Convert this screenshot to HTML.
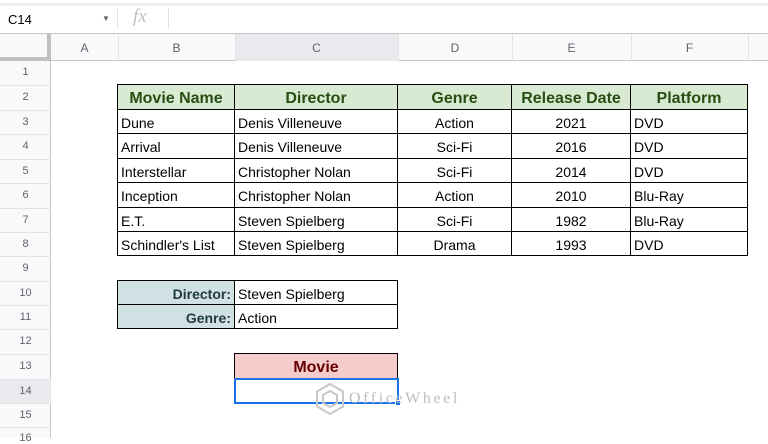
<!DOCTYPE html>
<html><head><style>
*{margin:0;padding:0;box-sizing:border-box}
body{width:768px;height:438px;overflow:hidden;background:#fff;font-family:"Liberation Sans",Arial,sans-serif;position:relative}
.a{position:absolute}
.hl{position:absolute;height:1px;background:#e2e3e3;left:0;width:51px}
.vh{position:absolute;top:34px;height:27px;width:1px;background:#e2e3e3}
.ch{position:absolute;top:34px;height:27px;line-height:28px;text-align:center;font-size:12px;color:#5f6368}
.rh{position:absolute;left:0;width:51px;text-align:center;font-size:11px;color:#5f6368}
.c{position:absolute;font-size:14px;color:#000;white-space:nowrap;overflow:hidden;padding:0 3px;border:1px solid #000;margin:-1px 0 0 -1px}
.h{background:#d9ead3;color:#274e13;font-weight:bold;font-size:16px;text-align:center}
.ctr{text-align:center}
.l{background:#d0e0e3;font-weight:bold;text-align:right;color:#1f3a40}
</style></head><body>
<div class="a" style="left:0;top:3px;width:768px;height:3px;background:#eeeeee"></div>
<div class="a" style="left:8px;top:12px;font-size:13px;color:#000">C14</div>
<div class="a" style="left:102px;top:14px;font-size:8px;color:#5f6368">▼</div>
<div class="a" style="left:117px;top:8px;width:1px;height:20px;background:#e0e0e0"></div>
<div class="a" style="left:133px;top:6px;font-family:'Liberation Serif',serif;font-style:italic;font-size:19px;color:#c0c0c0">fx</div>
<div class="a" style="left:168px;top:8px;width:1px;height:20px;background:#e0e0e0"></div>
<div class="a" style="left:0;top:33px;width:768px;height:28px;background:#f8f9fa;border-top:1px solid #c4c7c5;border-bottom:1px solid #c4c7c5"></div>
<div class="a" style="left:235px;top:34px;width:163px;height:27px;background:#e8eaed"></div>
<div class="a" style="left:0;top:61px;width:51px;height:377px;background:#f8f9fa;border-right:1px solid #c4c7c5"></div>
<div class="a" style="left:0;top:379px;width:51px;height:24px;background:#e8eaed"></div>
<div class="a" style="left:0;top:34px;width:51px;height:27px;border-right:4px solid #c0c0c0;border-bottom:4px solid #c0c0c0"></div>
<div class="vh" style="left:118px"></div><div class="vh" style="left:235px"></div><div class="vh" style="left:398px"></div><div class="vh" style="left:512px"></div><div class="vh" style="left:631px"></div><div class="vh" style="left:748px"></div>
<div class="hl" style="top:85px"></div><div class="hl" style="top:110px"></div><div class="hl" style="top:134px"></div><div class="hl" style="top:159px"></div><div class="hl" style="top:183px"></div><div class="hl" style="top:208px"></div><div class="hl" style="top:232px"></div><div class="hl" style="top:256px"></div><div class="hl" style="top:281px"></div><div class="hl" style="top:305px"></div><div class="hl" style="top:329px"></div><div class="hl" style="top:354px"></div><div class="hl" style="top:379px"></div><div class="hl" style="top:403px"></div><div class="hl" style="top:427px"></div>
<div class="ch" style="left:51px;width:67px">A</div><div class="ch" style="left:118px;width:117px">B</div><div class="ch" style="left:235px;width:163px">C</div><div class="ch" style="left:398px;width:114px">D</div><div class="ch" style="left:512px;width:119px">E</div><div class="ch" style="left:631px;width:117px">F</div>
<div class="rh" style="top:66px">1</div><div class="rh" style="top:91px">2</div><div class="rh" style="top:116px">3</div><div class="rh" style="top:140px">4</div><div class="rh" style="top:165px">5</div><div class="rh" style="top:189px">6</div><div class="rh" style="top:214px">7</div><div class="rh" style="top:238px">8</div><div class="rh" style="top:262px">9</div><div class="rh" style="top:287px">10</div><div class="rh" style="top:311px">11</div><div class="rh" style="top:335px">12</div><div class="rh" style="top:360px">13</div><div class="rh" style="top:385px">14</div><div class="rh" style="top:409px">15</div><div class="rh" style="top:432px">16</div>
<div class="c h" style="left:118px;top:85px;width:118px;height:26px;line-height:27px">Movie Name</div>
<div class="c h" style="left:235px;top:85px;width:164px;height:26px;line-height:27px">Director</div>
<div class="c h" style="left:398px;top:85px;width:115px;height:26px;line-height:27px">Genre</div>
<div class="c h" style="left:512px;top:85px;width:120px;height:26px;line-height:27px">Release Date</div>
<div class="c h" style="left:631px;top:85px;width:118px;height:26px;line-height:27px">Platform</div>

<div class="c" style="left:118px;top:110px;width:118px;height:25px;line-height:26px">Dune</div><div class="c" style="left:235px;top:110px;width:164px;height:25px;line-height:26px">Denis Villeneuve</div><div class="c ctr" style="left:398px;top:110px;width:115px;height:25px;line-height:26px">Action</div><div class="c ctr" style="left:512px;top:110px;width:120px;height:25px;line-height:26px">2021</div><div class="c" style="left:631px;top:110px;width:118px;height:25px;line-height:26px">DVD</div>
<div class="c" style="left:118px;top:134px;width:118px;height:26px;line-height:27px">Arrival</div><div class="c" style="left:235px;top:134px;width:164px;height:26px;line-height:27px">Denis Villeneuve</div><div class="c ctr" style="left:398px;top:134px;width:115px;height:26px;line-height:27px">Sci-Fi</div><div class="c ctr" style="left:512px;top:134px;width:120px;height:26px;line-height:27px">2016</div><div class="c" style="left:631px;top:134px;width:118px;height:26px;line-height:27px">DVD</div>
<div class="c" style="left:118px;top:159px;width:118px;height:25px;line-height:26px">Interstellar</div><div class="c" style="left:235px;top:159px;width:164px;height:25px;line-height:26px">Christopher Nolan</div><div class="c ctr" style="left:398px;top:159px;width:115px;height:25px;line-height:26px">Sci-Fi</div><div class="c ctr" style="left:512px;top:159px;width:120px;height:25px;line-height:26px">2014</div><div class="c" style="left:631px;top:159px;width:118px;height:25px;line-height:26px">DVD</div>
<div class="c" style="left:118px;top:183px;width:118px;height:26px;line-height:27px">Inception</div><div class="c" style="left:235px;top:183px;width:164px;height:26px;line-height:27px">Christopher Nolan</div><div class="c ctr" style="left:398px;top:183px;width:115px;height:26px;line-height:27px">Action</div><div class="c ctr" style="left:512px;top:183px;width:120px;height:26px;line-height:27px">2010</div><div class="c" style="left:631px;top:183px;width:118px;height:26px;line-height:27px">Blu-Ray</div>
<div class="c" style="left:118px;top:208px;width:118px;height:25px;line-height:26px">E.T.</div><div class="c" style="left:235px;top:208px;width:164px;height:25px;line-height:26px">Steven Spielberg</div><div class="c ctr" style="left:398px;top:208px;width:115px;height:25px;line-height:26px">Sci-Fi</div><div class="c ctr" style="left:512px;top:208px;width:120px;height:25px;line-height:26px">1982</div><div class="c" style="left:631px;top:208px;width:118px;height:25px;line-height:26px">Blu-Ray</div>
<div class="c" style="left:118px;top:232px;width:118px;height:25px;line-height:26px">Schindler's List</div><div class="c" style="left:235px;top:232px;width:164px;height:25px;line-height:26px">Steven Spielberg</div><div class="c ctr" style="left:398px;top:232px;width:115px;height:25px;line-height:26px">Drama</div><div class="c ctr" style="left:512px;top:232px;width:120px;height:25px;line-height:26px">1993</div><div class="c" style="left:631px;top:232px;width:118px;height:25px;line-height:26px">DVD</div>
<div class="c l" style="left:118px;top:281px;width:118px;height:25px;line-height:26px">Director:</div><div class="c" style="left:235px;top:281px;width:164px;height:25px;line-height:26px">Steven Spielberg</div>
<div class="c l" style="left:118px;top:305px;width:118px;height:25px;line-height:26px">Genre:</div><div class="c" style="left:235px;top:305px;width:164px;height:25px;line-height:26px">Action</div>
<div class="c ctr" style="left:235px;top:354px;width:164px;height:26px;line-height:27px;background:#f4cccc;color:#660000;font-weight:bold;font-size:16px">Movie</div>
<div class="a" style="left:234px;top:378px;width:165px;height:26px;border:2px solid #1a73e8"></div>
<div class="a" style="left:395px;top:400px;width:6px;height:6px;background:#1a73e8;border:1px solid #fff"></div>
<svg class="a" style="left:313px;top:382px" width="34" height="34" viewBox="0 0 34 34"><path d="M17 2 L30 9.5 L30 24.5 L17 32 L4 24.5 L4 9.5 Z" fill="none" stroke="#c8c8c8" stroke-width="2"/><path d="M17 9 L24 13 L24 21 L17 25 L10 21 L10 13 Z" fill="none" stroke="#c8c8c8" stroke-width="2"/></svg>
<div class="a" style="left:349px;top:390px;font-family:'Liberation Serif',serif;font-size:16px;letter-spacing:2.6px;color:#bdbdbd">OfficeWheel</div>
</body></html>
